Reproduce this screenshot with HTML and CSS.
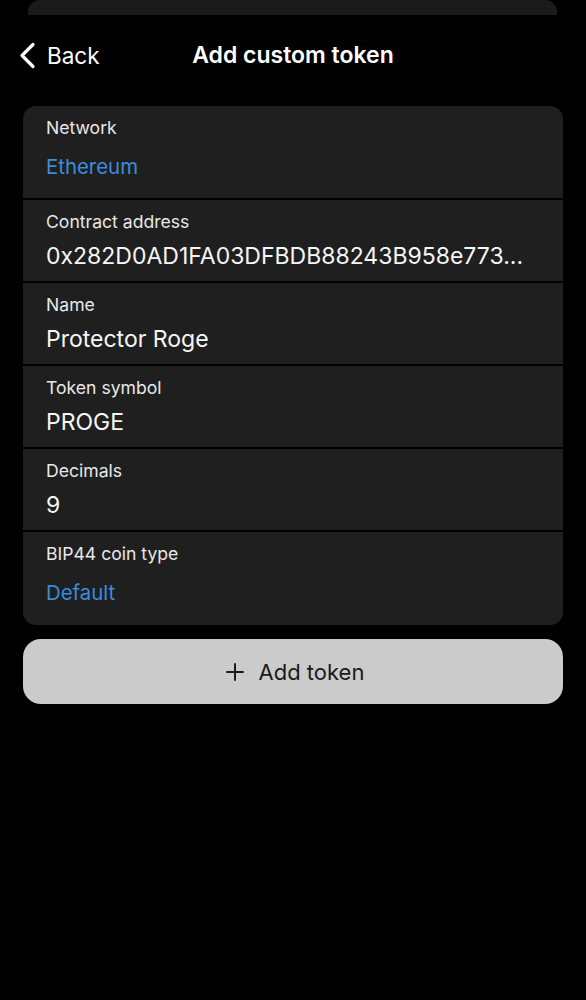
FILE: index.html
```html
<!DOCTYPE html>
<html>
  <head>
    <meta charset="UTF-8">
    <title>Add custom token</title>
    <link rel="stylesheet" href="styles.css">
  </head>
  <body>
  <div class="sheet-behind"></div>
  <div class="header">
    <a class="back" href="#">
      <svg width="18" height="27" viewBox="0 0 18 27"><path d="M15 2.5 L4 13.5 L15 24.5" fill="none" stroke="#fff" stroke-width="3.2" stroke-linecap="round" stroke-linejoin="round"/></svg>
      <span>Back</span>
    </a>
    <div class="title">Add custom token</div>
  </div>

  <div class="card">
    <div class="row pick">
      <div class="label">Network</div>
      <div class="value link">Ethereum</div>
    </div>
    <div class="row">
      <div class="label">Contract address</div>
      <div class="value">0x282D0AD1FA03DFBDB88243B958e773...</div>
    </div>
    <div class="row">
      <div class="label">Name</div>
      <div class="value">Protector Roge</div>
    </div>
    <div class="row">
      <div class="label">Token symbol</div>
      <div class="value">PROGE</div>
    </div>
    <div class="row">
      <div class="label">Decimals</div>
      <div class="value">9</div>
    </div>
    <div class="row pick">
      <div class="label">BIP44 coin type</div>
      <div class="value link">Default</div>
    </div>
  </div>

  <button class="add-btn">
    <svg width="18" height="18" viewBox="0 0 18 18"><path d="M9 1 V17 M1 9 H17" stroke="#1a1a1a" stroke-width="2" stroke-linecap="round"/></svg>
    <span>Add token</span>
  </button>
  </body>
</html>
```

FILE: styles.css
```css
body{margin:0;background:#000;color:#f4f4f4;font-family:Inter,"Noto Sans",sans-serif;}
.sheet-behind{height:15px;margin:0 29px 0 28px;background:#1b1b1c;border-radius:12px 12px 0 0;}
.header{position:relative;height:80px;display:flex;align-items:center;justify-content:center;}
.back{position:absolute;left:18px;top:27px;display:flex;align-items:center;gap:11px;color:#fff;text-decoration:none;font-size:22.5px;}
.title{font-size:23px;font-weight:600;color:#fff;}
.card{margin:11px 23px 0;padding-bottom:1px;background:#1f1f1f;border-radius:13px;overflow:hidden;}
.row{padding:10px 23px 10px;}
.row + .row{border-top:2px solid #000;}
.label{font-size:17.6px;line-height:24px;color:#e8e8e8;}
.value{font-size:23px;line-height:30px;margin-top:7px;white-space:nowrap;color:#f6f6f6;}
.row.pick{padding-bottom:16px;}
.row.pick .value{margin-top:12px;font-size:20.4px;}
.value.link{color:#3b8cdc;}
.add-btn{display:flex;align-items:center;justify-content:center;gap:15px;width:540px;height:65px;margin:14px 23px 0;padding:0 0 0 4px;border:none;border-radius:18px;background:#cbcbcb;color:#1a1a1a;font-family:Inter,"Noto Sans",sans-serif;font-size:22px;}
```
